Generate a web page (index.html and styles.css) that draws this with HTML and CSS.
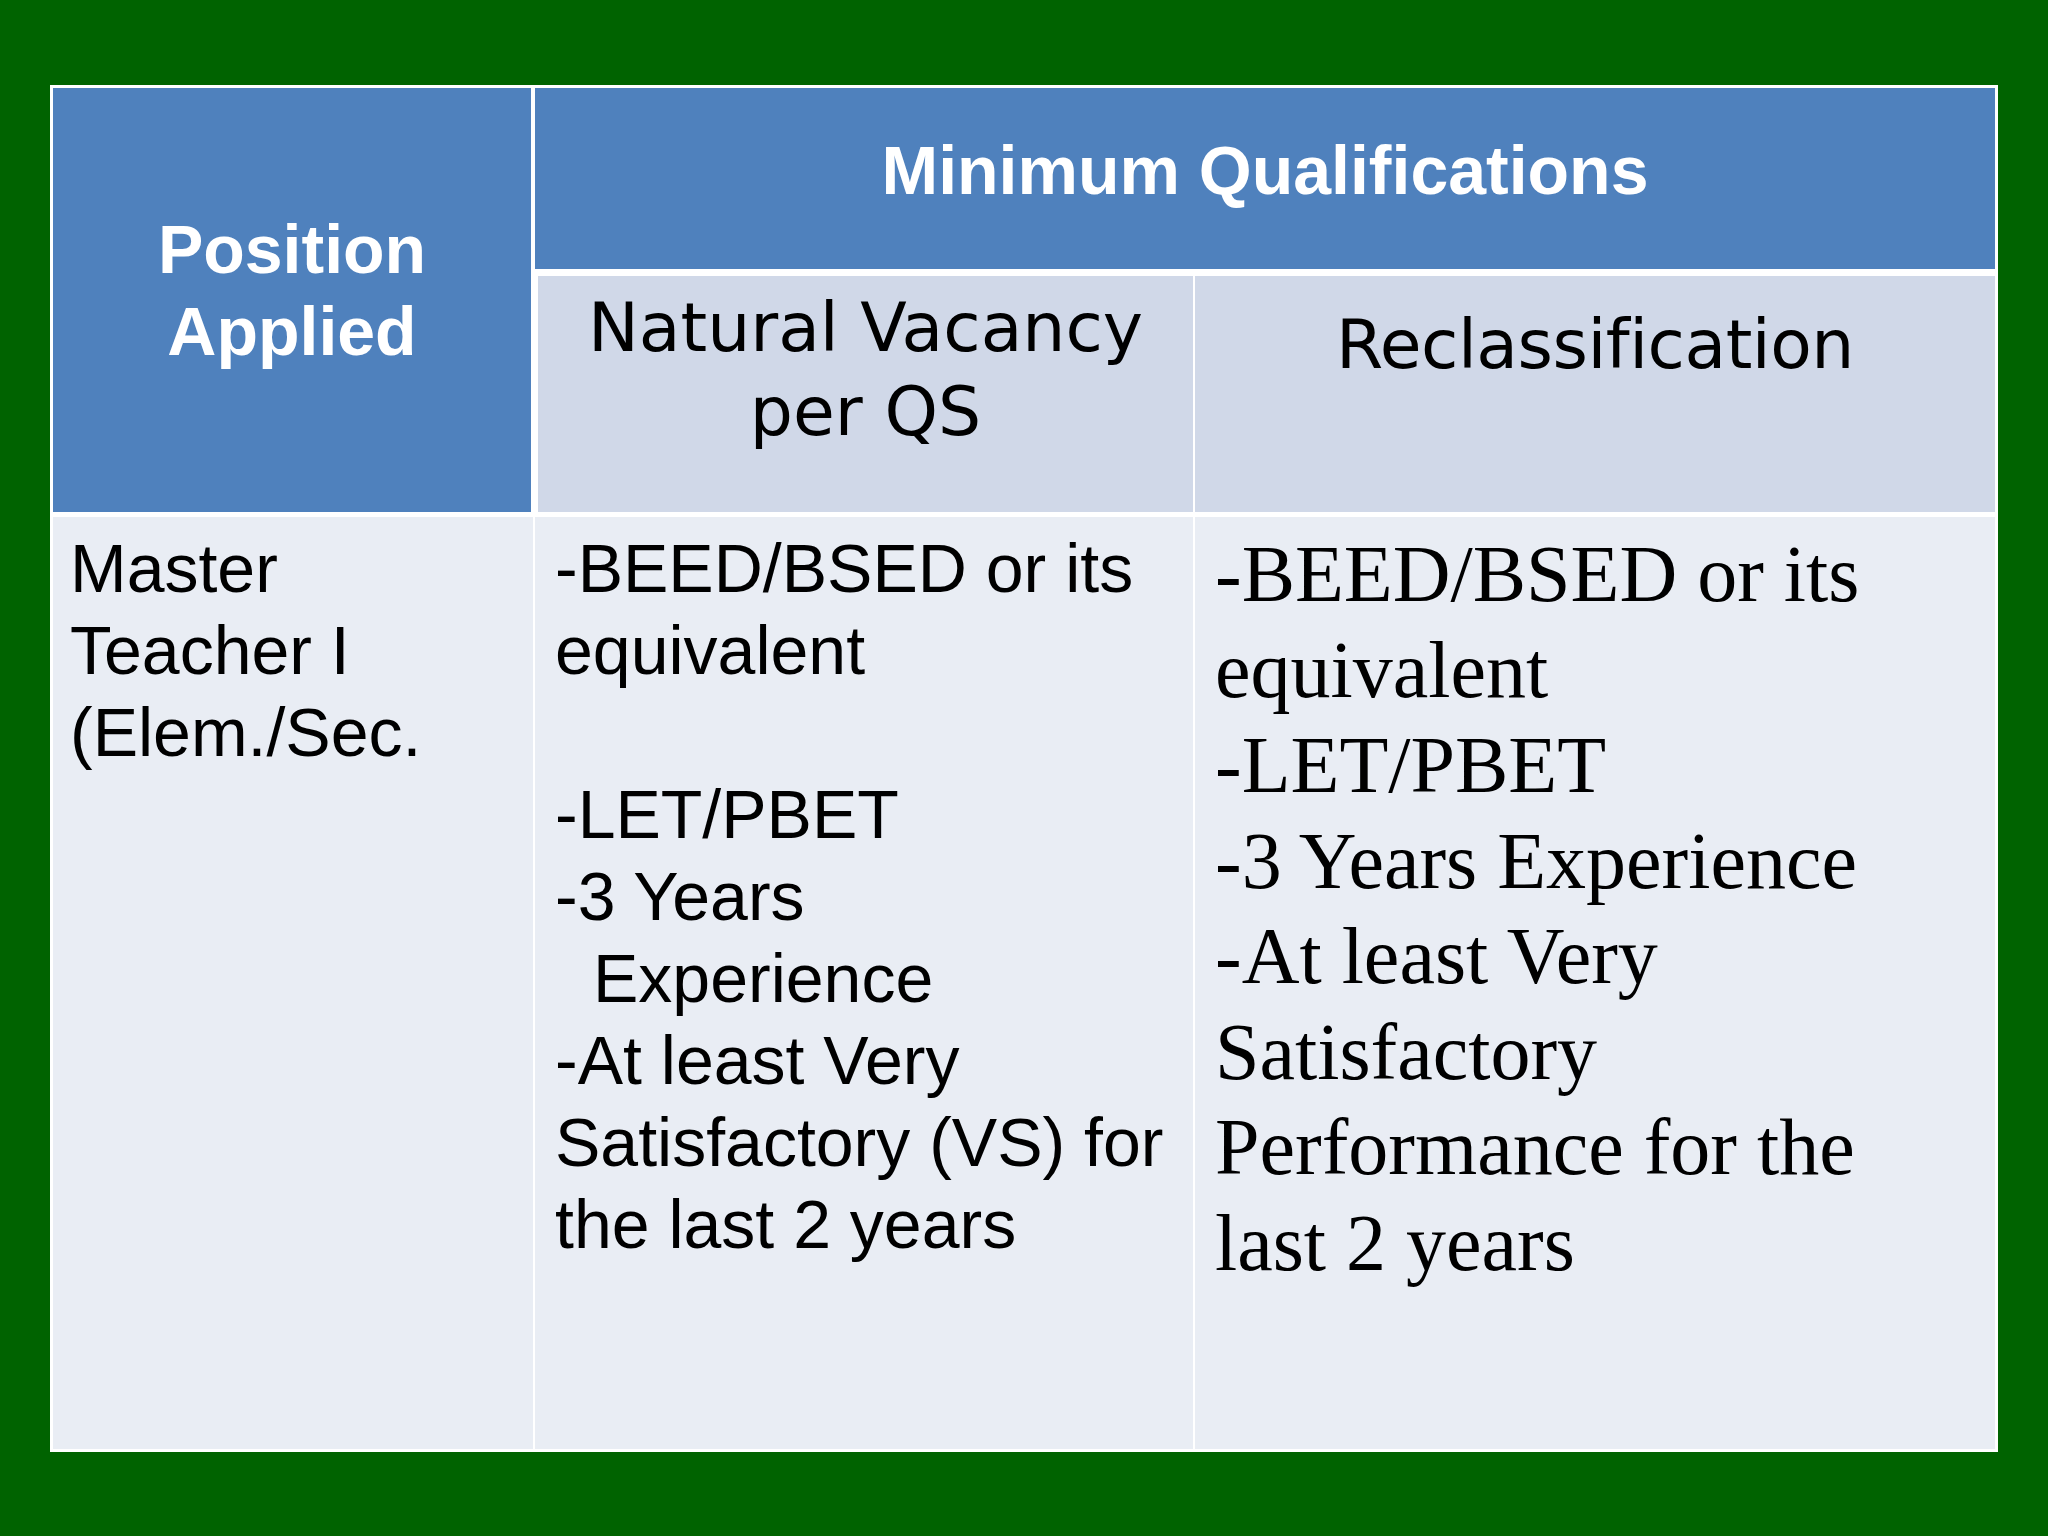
FILE: index.html
```html
<!DOCTYPE html>
<html lang="en">
<head>
<meta charset="utf-8">
<title>Minimum Qualifications</title>
<link rel="stylesheet" href="styles.css">
</head>
<body>
<div class="slide">
  <div class="qtable">
    <div class="cell head pos"><span>Position<br>Applied</span></div>
    <div class="cell head minq">Minimum Qualifications</div>
    <div class="cell sub nv">Natural Vacancy<br>per QS</div>
    <div class="cell sub rc">Reclassification</div>
    <div class="cell body c1">Master<br>Teacher I<br>(Elem./Sec.</div>
    <div class="cell body c2">-BEED/BSED or its<br>equivalent<br><br>-LET/PBET<br>-3 Years<br><span class="indent">Experience</span><br>-At least Very<br>Satisfactory (VS) for<br>the last 2 years</div>
    <div class="cell body c3">-BEED/BSED or its<br>equivalent<br>-LET/PBET<br>-3 Years Experience<br>-At least Very<br>Satisfactory<br>Performance for the<br>last 2 years</div>
  </div>
</div>
</body>
</html>
```
FILE: styles.css
```css
* {
  box-sizing: border-box;
}

html,
body {
  margin: 0;
  padding: 0;
}

body {
  width: 2048px;
  height: 1536px;
  overflow: hidden;
  background: #006300;
}

.slide {
  padding: 85px 0 0 50px;
}

.qtable {
  display: grid;
  width: 1948px;
  padding: 3px;
  background: #ffffff;
  grid-template-columns: 480px 658px 800px;
  grid-template-rows: 183px 236px 932px;
  column-gap: 2px;
  row-gap: 5px;
}

.head {
  background: #4f81bd;
  color: #ffffff;
  font-family: "Liberation Sans", Arial, sans-serif;
  font-weight: bold;
  font-size: 68px;
  line-height: 82px;
  text-align: center;
  display: flex;
  align-items: center;
  justify-content: center;
}

.pos {
  grid-column: 1;
  grid-row: 1 / span 2;
  margin-right: 2px;
  padding-bottom: 21px;
}

.minq {
  grid-column: 2 / span 2;
  grid-row: 1;
  margin-bottom: 2px;
  padding-bottom: 18px;
  white-space: nowrap;
}

.sub {
  background: #d0d8e8;
  color: #000000;
  font-family: "DejaVu Sans", Verdana, sans-serif;
  font-size: 68px;
  line-height: 84px;
  text-align: center;
  white-space: nowrap;
}

.nv {
  grid-column: 2;
  grid-row: 2;
  margin-left: 3px;
  padding-top: 10px;
}

.rc {
  grid-column: 3;
  grid-row: 2;
  padding-top: 27px;
  letter-spacing: -0.5px;
}

.body {
  grid-row: 3;
  background: #e9edf4;
  color: #000000;
  white-space: nowrap;
}

.c1,
.c2 {
  font-family: "Liberation Sans", Arial, sans-serif;
  font-size: 68px;
  line-height: 82px;
}

.c1 {
  grid-column: 1;
  padding: 10px 17px;
}

.c2 {
  grid-column: 2;
  padding: 10px 20px;
}

.indent {
  padding-left: 38px;
}

.c3 {
  grid-column: 3;
  padding: 10px 20px;
  font-family: "Liberation Serif", "Times New Roman", serif;
  font-size: 80px;
  line-height: 95.5px;
}
```
